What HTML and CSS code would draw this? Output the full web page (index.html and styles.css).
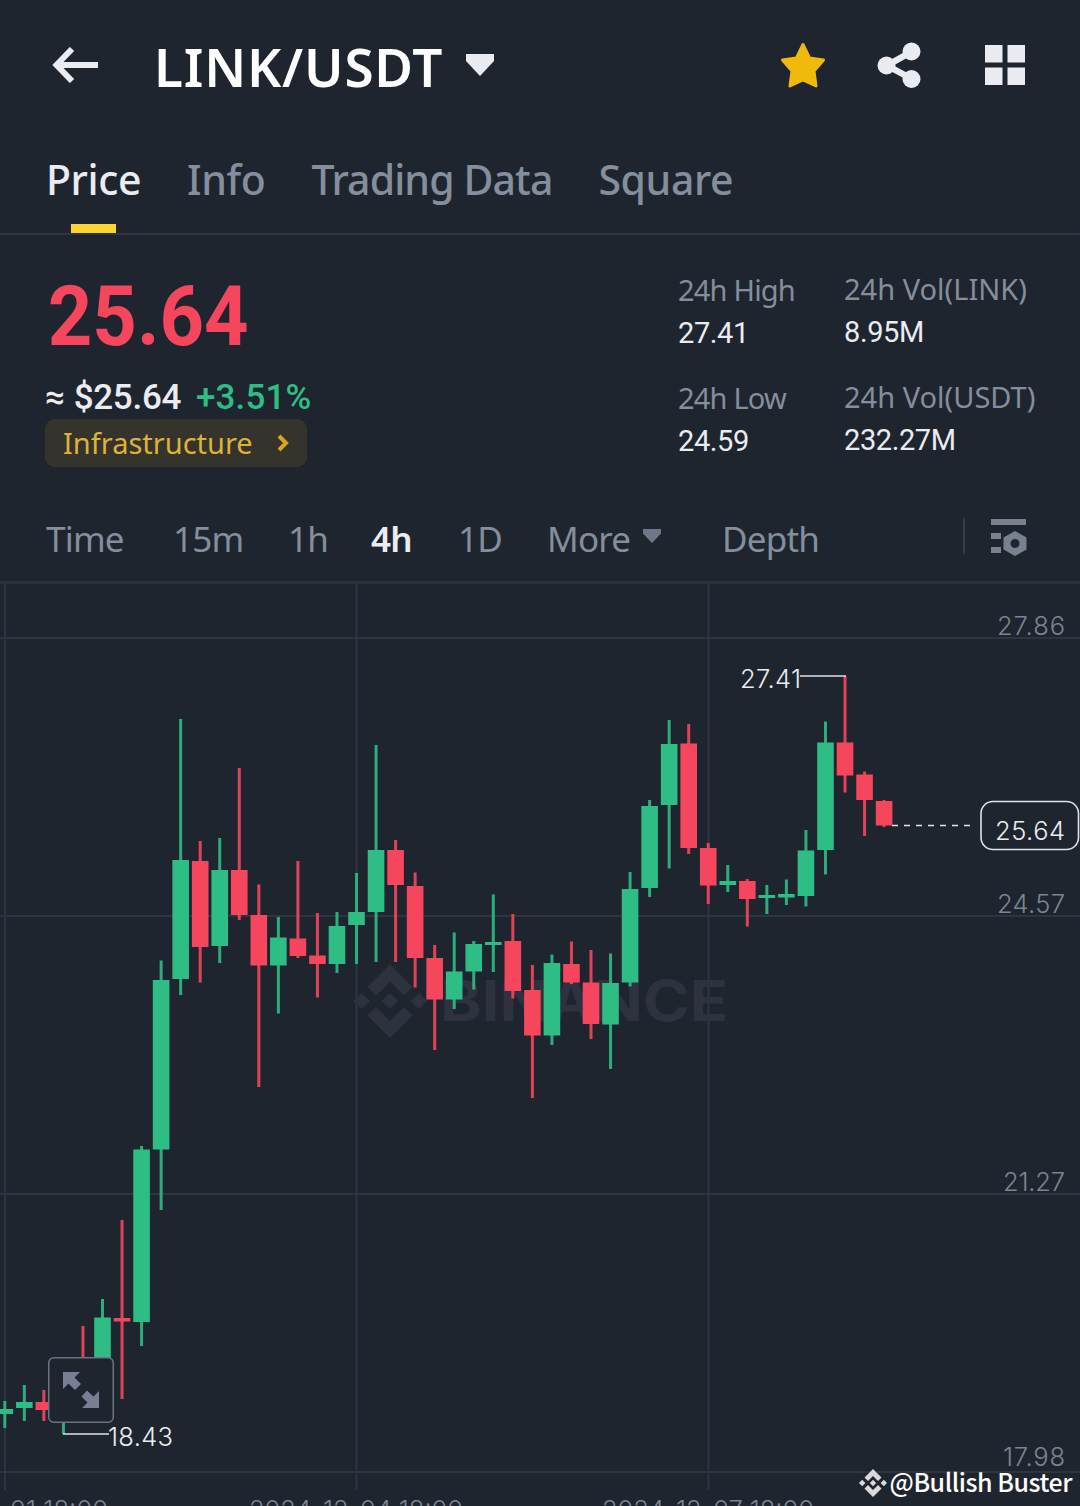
FILE: index.html
```html
<!DOCTYPE html>
<html lang="en">
<head>
  <meta charset="UTF-8">
  <title>LINK/USDT</title>
  <link rel="stylesheet" href="styles.css">
</head>
<body>
  <!-- Top bar -->
  <header class="topbar">
    <svg class="back" viewBox="0 0 46 36">
      <path d="M20 2 L4.500 18 L20 34 M5 18 H46" fill="none" stroke="#eaecf2" stroke-width="6"/>
    </svg>
    <h1 class="pair">LINK/USDT</h1>
    <svg class="pair-arrow" viewBox="0 0 28 22">
      <path d="M0 0H28V7L14 22L0 7Z" fill="#eaecf2"/>
    </svg>
    <div class="actions">
      <!-- Favourite -->
      <svg width="46" height="48" viewBox="0 0 46 48">
        <path d="M23 3.500 L29.500 17 L43.500 19 L34 30 L36 45 L23 39 L10 45 L12 30 L2.500 19 L16.500 17 Z" fill="#f0b90b" stroke="#f0b90b" stroke-width="3" stroke-linejoin="round"/>
      </svg>
      <!-- Share -->
      <svg width="44" height="48" viewBox="0 0 44 48">
        <path d="M35 10.500 L10 24.500 L35 38" fill="none" stroke="#eaecf2" stroke-width="6.500"/>
        <circle cx="34.500" cy="10.500" r="9" fill="#eaecf2"/>
        <circle cx="9.500" cy="24.500" r="9" fill="#eaecf2"/>
        <circle cx="34.500" cy="38" r="9" fill="#eaecf2"/>
      </svg>
      <!-- Grid -->
      <svg width="40" height="40" viewBox="0 0 40 40">
        <path d="M0 0H17.500V17.500H0ZM22.500 0H40V17.500H22.500ZM0 22.500H17.500V40H0ZM22.500 22.500H40V40H22.500Z" fill="#eaecf2"/>
      </svg>
    </div>
  </header>

  <!-- Tabs -->
  <nav class="tabs">
    <span class="tab active">Price</span>
    <span class="tab">Info</span>
    <span class="tab trading">Trading Data</span>
    <span class="tab">Square</span>
  </nav>

  <!-- Price summary -->
  <section class="summary">
    <div class="price-col">
      <div class="price">25.64</div>
      <div class="fiat"><span>≈</span> <span>$25.64</span><span class="change">+3.51%</span></div>
      <div class="tag">
        <span>Infrastructure</span>
        <svg width="12" height="18" viewBox="0 0 12 18">
          <path d="M2 2 L9 9 L2 16" fill="none" stroke="#d9a61b" stroke-width="4"/>
        </svg>
      </div>
    </div>
    <div class="stats">
      <div class="stat"><span class="label tight">24h High</span><span class="value">27.41</span></div>
      <div class="stat up"><span class="label">24h Vol(LINK)</span><span class="value">8.95M</span></div>
      <div class="stat"><span class="label tight">24h Low</span><span class="value">24.59</span></div>
      <div class="stat up"><span class="label">24h Vol(USDT)</span><span class="value">232.27M</span></div>
    </div>
  </section>

  <!-- Intervals -->
  <nav class="intervals">
    <span>Time</span>
    <span>15m</span>
    <span>1h</span>
    <span class="active">4h</span>
    <span>1D</span>
    <span>More
      <svg width="18" height="14" viewBox="0 0 18 14"><path d="M0 0H18V4.500L9 14L0 4.500Z" fill="#6f7888"/></svg>
    </span>
    <span>Depth</span>
    <i class="divider"></i>
    <svg width="36" height="37" viewBox="0 0 36 37">
      <path d="M0 0H35V6H0ZM0 14H10V20H0ZM0 28H10V34H0Z" fill="#788190"/>
      <path fill-rule="evenodd" d="M24 12 L35.500 18.500 V30.500 L24 37 L12.500 30.500 V18.500 Z M24 20 A4.500 4.500 0 1 0 24 29 A4.500 4.500 0 1 0 24 20 Z" fill="#788190"/>
    </svg>
  </nav>

  <!-- Candlestick chart -->
  <main class="chart">
    <svg width="1080" height="922" viewBox="0 584 1080 922">
      <g class="grid">
        <path d="M5 584V1490M356.500 584V1490M708.500 584V1490"/>
        <path d="M0 638H1080M0 916H1080M0 1194H1080M0 1472H1080"/>
      </g>

      <g class="watermark">
        <path d="M390 964 L412.500 987 L404 995.500 L390 981.500 L376 995.500 L367.500 987 Z"/>
        <path d="M390 1038 L412.500 1015.500 L404 1007 L390 1021 L376 1007 L367.500 1015.500 Z"/>
        <path d="M390 993 L398.500 1001 L390 1009 L381.500 1001 Z"/>
        <path d="M361.500 993 L370 1001 L361.500 1009 L353 1001 Z"/>
        <path d="M419 993 L427.500 1001 L419 1009 L410.500 1001 Z"/>
        <text x="440" y="1021" textLength="288" lengthAdjust="spacingAndGlyphs">BINANCE</text>
      </g>

      <g id="candles"></g>

      <g class="axis">
        <text x="997" y="635" textLength="68">27.86</text>
        <text x="997" y="913" textLength="68">24.57</text>
        <text x="1003" y="1191" textLength="62">21.27</text>
        <text x="1003" y="1466" textLength="62">17.98</text>
        <text x="-102" y="1519" textLength="210">2024-12-01 18:00</text>
        <text x="249" y="1519" textLength="214">2024-12-04 18:00</text>
        <text x="602" y="1519" textLength="212">2024-12-07 18:00</text>
      </g>

      <!-- High, low and last price -->
      <g class="marks">
        <path d="M800 676H846M63 1434H109"/>
        <text x="740" y="688" textLength="61">27.41</text>
        <text x="108" y="1446" textLength="65">18.43</text>
        <path class="dashed" d="M892 825.500H972"/>
        <rect x="981" y="801.500" width="97.500" height="48" rx="12"/>
        <text x="995" y="840" textLength="70">25.64</text>
      </g>

      <!-- Full screen button -->
      <g class="expand">
        <rect x="48.750" y="1357.750" width="64.500" height="64.500" rx="5"/>
        <path d="M63 1372H80L74.500 1377.500L81 1384L75 1390L68.500 1383.500L63 1389Z"/>
        <path d="M99 1408H82L87.500 1402.500L81.500 1396.500L87 1390.500L93.500 1396.500L99 1391Z"/>
      </g>
    </svg>

    <div class="author">
      <svg width="28" height="28" viewBox="0 0 28 28">
        <path d="M14 0L22.500 8.500L19 12L14 7L9 12L5.500 8.500ZM14 28L22.500 19.500L19 16L14 21L9 16L5.500 19.500ZM14 10.800L17.200 14L14 17.200L10.800 14ZM3.200 10.800L6.400 14L3.200 17.200L0 14ZM24.800 10.800L28 14L24.800 17.200L21.600 14Z" fill="#d9d9d9"/>
      </svg>
      <span>@Bullish Buster</span>
    </div>
  </main>
  <script src="chart.js"></script>
</body>
</html>
```

FILE: styles.css
```css
/* General */
* {
  box-sizing: border-box;
}
body {
  margin: 0;
  width: 1080px;
  height: 1506px;
  overflow: hidden;
  background: #1f252f;
  color: #eaecf2;
  font-family: "Noto Sans", "Open Sans", sans-serif;
}
svg {
  display: block;
  flex: none;
}
/* Top bar */
.topbar {
  display: flex;
  align-items: center;
  height: 130px;
  padding: 0 55px 0 52px;
}
.back {
  width: 46px;
  height: 36px;
}
.pair {
  margin: 4px 0 0 56px;
  width: 312px;
  font-size: 53px;
  font-weight: 600;
  line-height: 60px;
  letter-spacing: 0.8px;
  color: #fff;
  white-space: nowrap;
}
.pair-arrow {
  width: 28px;
  height: 22px;
}
.actions {
  display: flex;
  align-items: center;
  margin-left: auto;
}
.actions svg {
  margin-left: 64px;
}
.actions svg:nth-child(2) {
  margin-left: 51px;
}
/* Tabs */
.tabs {
  display: flex;
  gap: 46px;
  height: 105px;
  padding: 20px 0 0 46px;
  border-bottom: 2px solid #2e3540;
  font-size: 41px;
  font-weight: 500;
  line-height: 58px;
  letter-spacing: -0.4px;
  color: #848e9c;
  white-space: nowrap;
}
.tab {
  height: 83px;
}
.tab.active {
  display: flex;
  flex-direction: column;
  align-items: center;
  justify-content: space-between;
  color: #eaecf2;
}
.tab.active::after {
  content: "";
  width: 45px;
  height: 9px;
  background: #fcd535;
}
.trading {
  width: 241px;
  letter-spacing: -0.9px;
}
/* Price summary */
.summary {
  display: flex;
  justify-content: space-between;
  height: 265px;
  padding-left: 45px;
}
.price-col {
  padding-top: 32px;
}
.price {
  width: 230px;
  height: 100px;
  padding-left: 3px;
  font-family: Roboto, sans-serif;
  font-size: 84px;
  font-weight: 700;
  line-height: 100px;
  color: #f6465d;
  transform: scaleX(0.925);
  transform-origin: left;
}
.fiat {
  display: flex;
  gap: 9px;
  height: 52px;
  margin-top: 5px;
  font-family: Roboto, sans-serif;
  font-size: 35px;
  font-weight: 500;
  line-height: 52px;
  letter-spacing: -0.3px;
}
.change {
  margin-left: 6px;
  letter-spacing: 0.1px;
  color: #2ebd85;
}
.tag {
  display: flex;
  align-items: center;
  justify-content: space-between;
  width: 262px;
  height: 48px;
  margin-top: -5px;
  padding: 0 18px;
  border-radius: 10px;
  background: #35342c;
  color: #dfb13a;
  font-size: 29px;
}
.tag span {
  margin-top: -2px;
}
.stats {
  display: grid;
  grid-template-columns: 166px 236px;
  grid-auto-rows: 108px;
  padding-top: 33px;
}
.stat {
  display: flex;
  flex-direction: column;
  padding-top: 1px;
  white-space: nowrap;
}
.stat.up {
  padding-top: 0;
}
.label {
  font-size: 29px;
  line-height: 42px;
  color: #848e9c;
}
.label.tight {
  letter-spacing: -0.8px;
}
.value {
  margin-top: 1px;
  font-family: Roboto, sans-serif;
  font-size: 29px;
  line-height: 42px;
  letter-spacing: -0.4px;
}
/* Intervals */
.intervals {
  display: grid;
  grid-template-columns: 127px 115px 83px 87px 89px 175px 241px 28px 36px;
  align-items: center;
  height: 84px;
  padding-left: 46px;
  padding-bottom: 6px;
  border-bottom: 3px solid #2a303a;
  font-size: 35px;
  letter-spacing: -0.8px;
  color: #848e9c;
  white-space: nowrap;
}
.intervals span {
  display: flex;
  align-items: center;
  gap: 13px;
  padding-top: 2px;
}
.intervals span svg {
  margin-top: -5px;
}
.intervals .active {
  font-weight: 600;
  color: #eaecf2;
}
.divider {
  width: 2px;
  height: 36px;
  margin-top: -4px;
  background: #363e49;
}
/* Chart */
.chart {
  position: relative;
  height: 922px;
}
.chart text {
  font-family: Inter, "Liberation Sans", sans-serif;
  font-size: 25.500px;
  font-weight: 300;
}
.grid path {
  stroke: #2e3540;
  stroke-width: 2;
}
.watermark path,
.watermark text {
  fill: #2d323e;
}
.chart .watermark text {
  font-size: 56px;
  font-weight: 700;
}
.axis text {
  fill: #7b8492;
}
.marks text {
  fill: #eaecf2;
}
.marks path,
.marks rect {
  fill: none;
  stroke: #dfe2e8;
  stroke-width: 1.600;
}
.marks .dashed {
  stroke-dasharray: 6 6;
}
.up-candle {
  fill: #2ebd85;
}
.down-candle {
  fill: #f6465d;
}
.wick {
  opacity: 0.900;
}
.expand rect {
  fill: #1f252f;
  stroke: #6b7280;
  stroke-width: 1.500;
}
.expand path {
  fill: #787f92;
}
/* Author stamp over the chart */
.author {
  position: absolute;
  right: 8px;
  bottom: 6px;
  display: flex;
  align-items: center;
  gap: 3px;
  font-family: "Noto Sans CJK SC", sans-serif;
  font-size: 25px;
  font-weight: 500;
  line-height: 38px;
  letter-spacing: -0.45px;
  color: #fff;
  white-space: nowrap;
}
.author span {
  margin-top: -3px;
}
```

FILE: chart.js
```js
// side, body top, body bottom, wick top, wick bottom
const candles = [
  ['u', 1409, 1414, 1401, 1428],
  ['u', 1402, 1408, 1385, 1421],
  ['d', 1402, 1410, 1390, 1421],
  ['u', 1400, 1416, 1395, 1434],
  ['d', 1370, 1400, 1326, 1410],
  ['u', 1317.5, 1380, 1299, 1390],
  ['d', 1318, 1321.5, 1220, 1399],
  ['u', 1149.5, 1322, 1146, 1346],
  ['u', 980, 1149.5, 960.5, 1210],
  ['u', 860, 979, 719, 995],
  ['d', 861, 947, 841, 982.5],
  ['u', 870, 946, 838, 963],
  ['d', 870, 915, 768, 920],
  ['d', 915, 965.5, 884.5, 1087],
  ['u', 937.5, 965.5, 917, 1013.5],
  ['d', 938.5, 956, 861, 958],
  ['d', 955.5, 964, 913, 997.5],
  ['u', 926, 964, 912, 973],
  ['u', 912, 925, 873, 964],
  ['u', 850, 912, 745, 962],
  ['d', 850, 885, 840, 962],
  ['d', 886, 958, 872.5, 987.5],
  ['d', 958, 999.5, 945, 1050],
  ['u', 971.5, 999.5, 932.5, 1009],
  ['u', 944, 971.5, 941, 989.5],
  ['u', 942, 945, 894.5, 972],
  ['d', 941, 991, 914, 998.5],
  ['d', 990, 1035.5, 965, 1098],
  ['u', 963, 1035.5, 954.5, 1045],
  ['d', 964, 982.5, 941.5, 984],
  ['d', 982.5, 1024, 950, 1039],
  ['u', 983, 1024.5, 953.5, 1069],
  ['u', 889, 982.5, 872, 986.5],
  ['u', 806, 888, 800, 897],
  ['u', 744, 805, 720, 868.5],
  ['d', 743.5, 848, 724, 854],
  ['d', 848, 885.5, 843, 904],
  ['u', 881, 885, 865, 892],
  ['d', 881, 899, 879, 926.5],
  ['u', 895, 898, 885, 914],
  ['u', 894, 897.5, 879.5, 905],
  ['u', 850.5, 896, 830, 906.5],
  ['u', 742.5, 850, 721.5, 874.5],
  ['d', 742.5, 775.5, 676, 792.5],
  ['d', 774.5, 800, 771.5, 836],
  ['d', 801, 825.5, 800, 827]
];

const STEP = 19.54;
const BODY = 16.6;
const layer = document.getElementById('candles');

function addRect(x, top, width, bottom, cls) {
  const rect = document.createElementNS('http://www.w3.org/2000/svg', 'rect');
  rect.setAttribute('x', x);
  rect.setAttribute('y', top);
  rect.setAttribute('width', width);
  rect.setAttribute('height', bottom - top);
  rect.setAttribute('class', cls);
  layer.appendChild(rect);
}

candles.forEach(([side, top, bottom, high, low], i) => {
  const x = 4.8 + i * STEP;
  const cls = side === 'u' ? 'up-candle' : 'down-candle';
  addRect(x - 1.5, high, 3, low, cls + ' wick');
  addRect(x - BODY / 2, top, BODY, bottom, cls);
});
```
